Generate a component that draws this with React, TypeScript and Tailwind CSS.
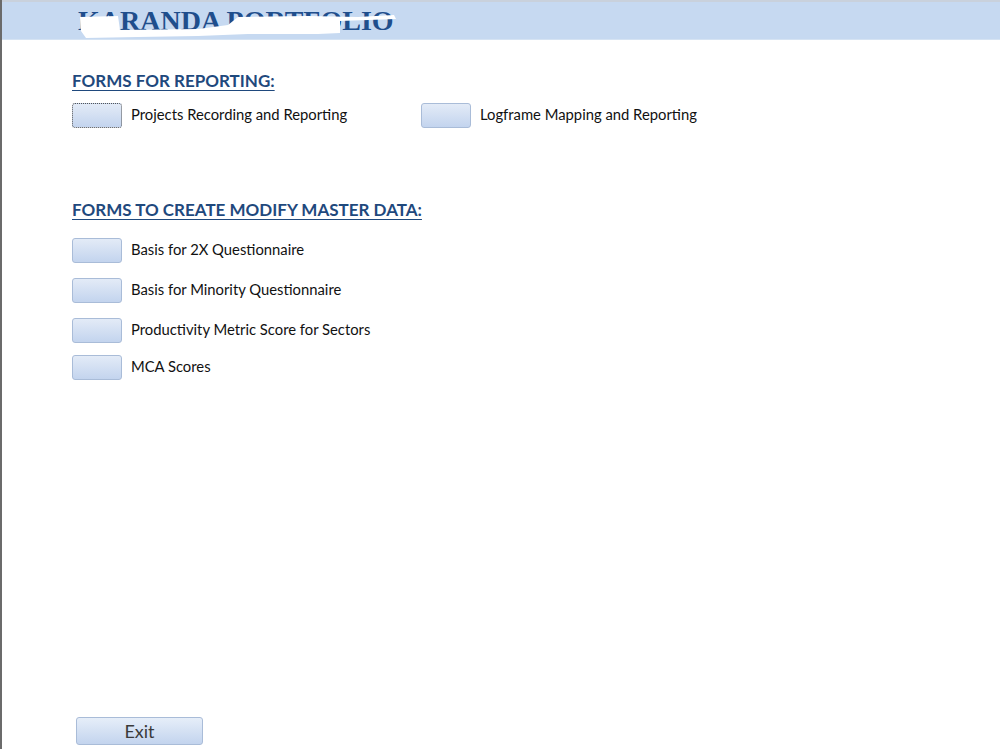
const Btn = ({ focused = false }: { focused?: boolean }) => (
  <button
    className={
      "w-[50px] h-[25px] rounded-[3px] bg-gradient-to-b from-[#e3ebf7] to-[#c3d4ee] shrink-0 " +
      (focused ? "border border-dotted border-[#555]" : "border border-[#a9bcd8]")
    }
  />
);

const Row = ({ label, focused, wide }: { label: string; focused?: boolean; wide?: boolean }) => (
  <div className={"flex items-center gap-[9px] " + (wide ? "w-[349px]" : "")}>
    <Btn focused={focused} />
    <span className="text-[14.8px] text-[#111] leading-none pb-[2px]">{label}</span>
  </div>
);

const App = () => {
  return (
    <div className="w-[1000px] h-[749px] bg-white border-l-2 border-[#6b6b6b] flex flex-col font-['Lato','Open_Sans',sans-serif]">
      <header className="h-[40px] bg-[#c6d9f1] border-t-2 border-[#c9d1dc] border-b border-b-[#d5e3f3] shrink-0">
        <div className="relative ml-[76px] mt-[2px] w-fit">
          <h1 className="font-['Liberation_Serif',serif] font-bold text-[28px] leading-[34px] text-[#1f4e8c] whitespace-nowrap">
            KARANDA PORTFOLIO
          </h1>
          <svg className="absolute left-0 top-0" width="320" height="36" viewBox="0 0 320 36">
            <path
              d="M2 13 L40 12 L42 26 L120 25 L150 21 L160 13 L230 12 L280 13 L316 11 L318 15 L262 17 L262 29 L240 30 L170 30 L120 32 L60 33 L8 34 L3 27 Z"
              fill="#fff"
            />
          </svg>
        </div>
      </header>

      <main className="flex-1 flex flex-col pl-[70px] pb-[4px]">
        <h2 className="mt-[30px] text-[17px] font-bold text-[#1f497d] underline underline-offset-[3px] leading-[22px]">
          FORMS FOR REPORTING:
        </h2>
        <div className="mt-[11px] flex">
          <Row label="Projects Recording and Reporting" focused wide />
          <Row label="Logframe Mapping and Reporting" />
        </div>

        <h2 className="mt-[71px] text-[17px] font-bold text-[#1f497d] underline underline-offset-[3px] leading-[22px]">
          FORMS TO CREATE MODIFY MASTER DATA:
        </h2>
        <div className="mt-[17px] flex flex-col">
          <Row label="Basis for 2X Questionnaire" />
          <div className="mt-[15px]">
            <Row label="Basis for Minority Questionnaire" />
          </div>
          <div className="mt-[15px]">
            <Row label="Productivity Metric Score for Sectors" />
          </div>
          <div className="mt-[12px]">
            <Row label="MCA Scores" />
          </div>
        </div>

        <button className="mt-auto ml-[4px] w-[127px] h-[28px] rounded-[3px] border border-[#a9bcd8] bg-gradient-to-b from-[#e6eef9] to-[#c3d4ee] text-[18px] text-[#3a3a3a] leading-none">
          Exit
        </button>
      </main>
    </div>
  );
};

export default App;
